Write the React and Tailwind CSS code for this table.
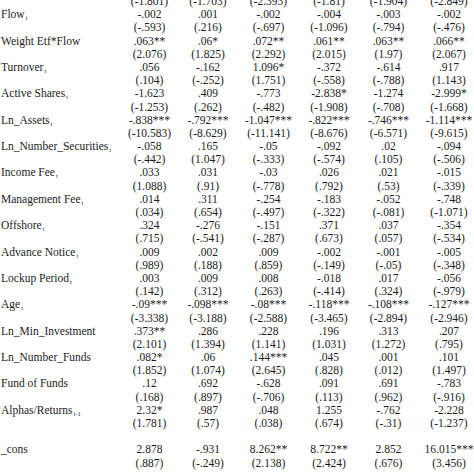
import React from "react";

const topStats = ["(-1.801)", "(-1.703)", "(-2.393)", "(-1.81)", "(-1.904)", "(-2.849)"];

const rows = [
  { label: "Flow", sub: "t", coef: ["-.002", ".001", "-.002", "-.004", "-.003", "-.002"], t: ["(-.593)", "(.216)", "(-.697)", "(-1.096)", "(-.794)", "(-.476)"] },
  { label: "Weight Etf*Flow", coef: [".063**", ".06*", ".072**", ".061**", ".063**", ".066**"], t: ["(2.076)", "(1.825)", "(2.292)", "(2.015)", "(1.97)", "(2.067)"] },
  { label: "Turnover", sub: "t", coef: [".056", "-.162", "1.096*", "-.372", "-.614", ".917"], t: ["(.104)", "(-.252)", "(1.751)", "(-.558)", "(-.788)", "(1.143)"] },
  { label: "Active Shares", sub: "t", coef: ["-1.623", ".409", "-.773", "-2.838*", "-1.274", "-2.999*"], t: ["(-1.253)", "(.262)", "(-.482)", "(-1.908)", "(-.708)", "(-1.668)"] },
  { label: "Ln_Assets", sub: "t", coef: ["-.838***", "-.792***", "-1.047***", "-.822***", "-.746***", "-1.114***"], t: ["(-10.583)", "(-8.629)", "(-11.141)", "(-8.676)", "(-6.571)", "(-9.615)"] },
  { label: "Ln_Number_Securities", sub: "t", coef: ["-.058", ".165", "-.05", "-.092", ".02", "-.094"], t: ["(-.442)", "(1.047)", "(-.333)", "(-.574)", "(.105)", "(-.506)"] },
  { label: "Income Fee", sub: "t", coef: [".033", ".031", "-.03", ".026", ".021", "-.015"], t: ["(1.088)", "(.91)", "(-.778)", "(.792)", "(.53)", "(-.339)"] },
  { label: "Management Fee", sub: "t", coef: [".014", ".311", "-.254", "-.183", "-.052", "-.748"], t: ["(.034)", "(.654)", "(-.497)", "(-.322)", "(-.081)", "(-1.071)"] },
  { label: "Offshore", sub: "t", coef: [".324", "-.276", "-.151", ".371", ".037", "-.354"], t: ["(.715)", "(-.541)", "(-.287)", "(.673)", "(.057)", "(-.534)"] },
  { label: "Advance Notice", sub: "t", coef: [".009", ".002", ".009", "-.002", "-.001", "-.005"], t: ["(.989)", "(.188)", "(.859)", "(-.149)", "(-.05)", "(-.348)"] },
  { label: "Lockup Period", sub: "t", coef: [".003", ".009", ".008", "-.018", ".017", "-.056"], t: ["(.142)", "(.312)", "(.263)", "(-.414)", "(.324)", "(-.979)"] },
  { label: "Age", sub: "t", coef: ["-.09***", "-.098***", "-.08***", "-.118***", "-.108***", "-.127***"], t: ["(-3.338)", "(-3.188)", "(-2.588)", "(-3.465)", "(-2.894)", "(-2.946)"] },
  { label: "Ln_Min_Investment", coef: [".373**", ".286", ".228", ".196", ".313", ".207"], t: ["(2.101)", "(1.394)", "(1.141)", "(1.031)", "(1.272)", "(.795)"] },
  { label: "Ln_Number_Funds", coef: [".082*", ".06", ".144***", ".045", ".001", ".101"], t: ["(1.852)", "(1.074)", "(2.645)", "(.828)", "(.012)", "(1.497)"] },
  { label: "Fund of Funds", coef: [".12", ".692", "-.628", ".091", ".691", "-.783"], t: ["(.168)", "(.897)", "(-.706)", "(.113)", "(.962)", "(-.916)"] },
  { label: "Alphas/Returns", sub: "t-1", coef: ["2.32*", ".987", ".048", "1.255", "-.762", "-2.228"], t: ["(1.781)", "(.57)", "(.038)", "(.674)", "(-.31)", "(-1.237)"] },
];

const cons = { coef: ["2.878", "-.931", "8.262**", "8.722**", "2.852", "16.015***"], t: ["(.887)", "(-.249)", "(2.138)", "(2.424)", "(.676)", "(3.456)"] };

const Row = ({ label, sub, cells }) => (
  <div className="grid grid-cols-[121px_57px_60px_61px_60px_59px_62px] h-[13.2px] items-center">
    <div className="pl-px whitespace-nowrap">
      {label}
      {sub && <sub className="text-[6.5px] align-baseline relative top-[2px] ml-[1px]">{sub}</sub>}
    </div>
    {cells.map((c, i) => (
      <div key={i} className="text-center whitespace-nowrap">
        {c}
      </div>
    ))}
  </div>
);

export default function App() {
  return (
    <div className="w-[474px] h-[474px] overflow-hidden bg-white">
      <div
        className="-mt-[5px] text-[11.5px] leading-[13.2px] text-[#1c1c1c]"
        style={{ fontFamily: '"Liberation Serif", "Times New Roman", serif' }}
      >
        <Row label="" cells={topStats} />
        {rows.map((r) => (
          <React.Fragment key={r.label}>
            <Row label={r.label} sub={r.sub} cells={r.coef} />
            <Row label="" cells={r.t} />
          </React.Fragment>
        ))}
        <Row label="" cells={["", "", "", "", "", ""]} />
        <Row label="_cons" cells={cons.coef} />
        <Row label="" cells={cons.t} />
      </div>
    </div>
  );
}
